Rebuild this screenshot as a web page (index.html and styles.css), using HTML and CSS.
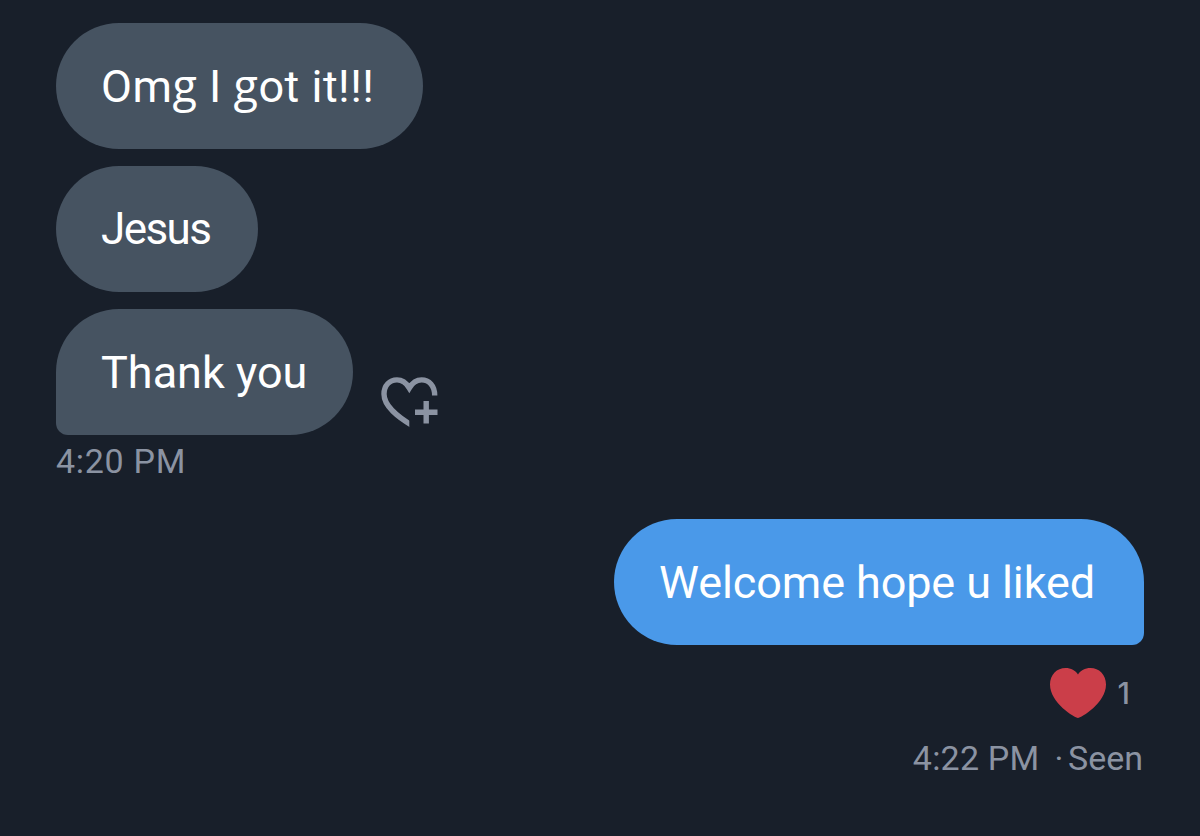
FILE: index.html
```
<!DOCTYPE html>
<html lang="en">
<head>
    <meta charset="UTF-8">
    <meta name="viewport" content="width=device-width, initial-scale=1.0">
    <title>Messages</title>
    <link rel="stylesheet" href="styles.css">
</head>
<body>
    <main class="chat">
        <section class="group received">
            <div class="bubble msg-omg">Om<span class="g">g</span> I <span class="g">g</span>ot it!!!</div>
            <div class="bubble msg-jesus">Jesus</div>
            <div class="row">
                <div class="bubble last msg-thanks">Thank you</div>
                <svg class="react" viewBox="0 0 58 52" width="58" height="52" aria-label="Add reaction">
                    <clipPath id="left-part"><path d="M0 0H58V22H28.300V52H0Z"/></clipPath>
                    <path clip-path="url(#left-part)" d="M32 50C17 41 3 30.500 3 18C3 9.500 8.500 3.900 16 3.900C21.500 3.900 25 6.500 28.300 12C31.600 6.500 35 3.900 40.600 3.900C48 3.900 53.700 9.500 53.700 19.500"/>
                    <path d="M45.200 25V47.500M34 36.200H56.500"/>
                </svg>
            </div>
            <div class="time">4:20 PM</div>
        </section>

        <section class="group sent">
            <div class="bubble last msg-welcome">Welcome hope u liked</div>
            <div class="reaction">
                <svg class="heart" viewBox="0 0 56 50" width="56" height="50">
                    <path d="M28 50C25 50 0 35 0 16.500C0 6.500 7 0 15.500 0C21 0 25.500 2.500 28 6.500C30.500 2.500 35 0 40.500 0C49 0 56 6.500 56 16.500C56 35 31 50 28 50Z"/>
                </svg>
                <span class="count">1</span>
            </div>
            <div class="time"><span>4:22 PM</span><span class="dot">·</span><span class="seen">Seen</span></div>
        </section>
    </main>
</body>
</html>
```
FILE: styles.css
```
* {
    box-sizing: border-box;
}

body {
    margin: 0;
    background-color: #181f2a;
    font-family: Roboto, "Liberation Sans", sans-serif;
}

.chat {
    height: 836px;
    padding: 23px 56px 0;
    overflow: hidden;
}

.group {
    display: flex;
    flex-direction: column;
    align-items: flex-start;
}

.bubble {
    height: 126px;
    margin-bottom: 17px;
    padding: 0 45px;
    border-radius: 63px;
    background-color: #465361;
    color: #fff;
    font-size: 45px;
    line-height: 127px;
    white-space: nowrap;
}

.g {
    font-family: "Open Sans", sans-serif;
    line-height: 1;
}

.row {
    display: flex;
    align-items: flex-end;
    gap: 28px;
}

.received .last {
    margin-bottom: 0;
    border-bottom-left-radius: 12px;
}

.react {
    margin-bottom: 7px;
    fill: none;
    stroke: #8b93a2;
    stroke-width: 5.4;
}

.time {
    display: flex;
    height: 40px;
    color: #8b93a2;
    font-size: 34px;
    line-height: 40px;
    letter-spacing: 0.7px;
    white-space: nowrap;
}

.received .time {
    margin-top: 6px;
}

.sent {
    align-items: flex-end;
    margin-top: 38px;
}

.sent .bubble {
    margin-bottom: 0;
    border-bottom-right-radius: 12px;
    background-color: #4a99e9;
}

.reaction {
    display: flex;
    align-items: center;
    gap: 12px;
    height: 50px;
    margin: 23px 14px 0 0;
    color: #8b93a2;
}

.heart {
    fill: #cb3e49;
}

.count {
    font-family: Inter, sans-serif;
    font-size: 30px;
    font-weight: 500;
}

.sent .time {
    margin-top: 20px;
    padding-right: 1px;
}

.sent .time span:first-child {
    letter-spacing: 0.2px;
}

.dot {
    margin: 0 4px 0 15px;
}

.seen {
    letter-spacing: 0;
}

.msg-omg {
    width: 367px;
    letter-spacing: 0.5px;
}

.msg-jesus {
    width: 202px;
    font-size: 44px;
    letter-spacing: -1.6px;
}

.msg-thanks {
    width: 297px;
}

.msg-welcome {
    width: 530px;
    letter-spacing: -0.1px;
}
```
